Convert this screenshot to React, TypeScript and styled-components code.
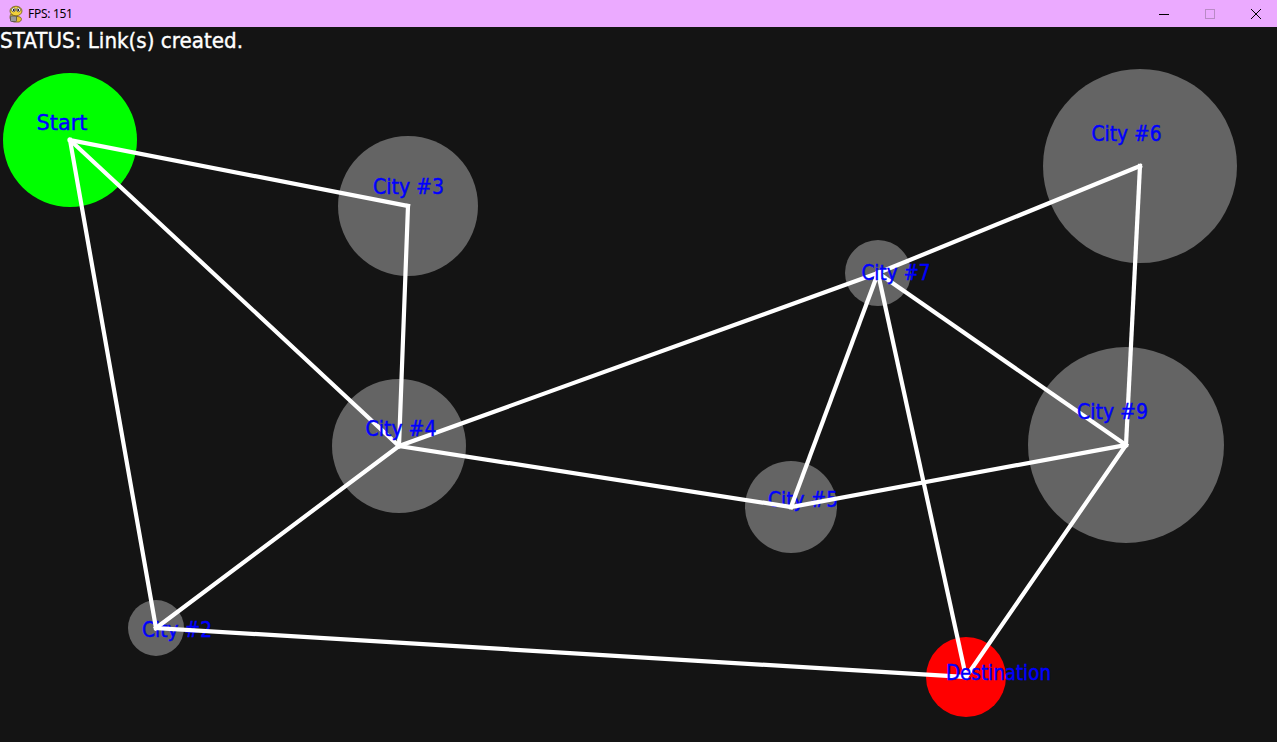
import React from "react";
import styled, { createGlobalStyle } from "styled-components";

const GlobalStyle = createGlobalStyle`
  html, body { margin: 0; padding: 0; background: #141414; overflow: hidden; }
  #root { width: 100vw; height: 100vh; }
`;

const Window = styled.div`
  display: flex;
  flex-direction: column;
  width: 1277px;
  height: 742px;
  overflow: hidden;
`;

const TitleBar = styled.div`
  display: flex;
  align-items: center;
  height: 27px;
  flex: 0 0 27px;
  background: #ebaaff;
  overflow: hidden;
`;

const AppIcon = styled.svg`
  width: 18px;
  height: 18px;
  margin-left: 7px;
  margin-right: 3px;
  flex: 0 0 auto;
`;

const TitleText = styled.span`
  font-family: "Noto Sans", "Open Sans", sans-serif;
  font-size: 12px;
  letter-spacing: -0.3px;
  color: #000;
  line-height: 27px;
`;

const Controls = styled.div`
  display: flex;
  margin-left: auto;
  margin-right: -2px;
  height: 27px;
`;

const ControlButton = styled.div`
  width: 46px;
  height: 27px;
  display: flex;
  align-items: center;
  justify-content: center;
`;

const Canvas = styled.div`
  position: relative;
  flex: 1 1 auto;
  background: #141414;
`;

const Graph = styled.svg`
  display: block;
  width: 1277px;
  height: 715px;
`;

const NodeLabel = styled.text`
  font-family: "DejaVu Sans", "Liberation Sans", sans-serif;
  font-size: 21px;
  fill: #0000ff;
  stroke: #0000ff;
  stroke-width: 0.45px;
`;

const StatusText = styled.text`
  font-family: "DejaVu Sans", "Liberation Sans", sans-serif;
  font-size: 22px;
  fill: #ffffff;
  stroke: #ffffff;
  stroke-width: 0.4px;
`;

type Node = {
  id: string;
  label: string;
  x: number;
  y: number;
  r: number;
  color: string;
  w: number;
  under?: boolean;
};

const nodes: Node[] = [
  { id: "start", label: "Start", x: 70, y: 140, r: 67, color: "#00ff00", w: 51 },
  { id: "c3", label: "City #3", x: 408, y: 206, r: 70, color: "#646464", w: 71 },
  { id: "c4", label: "City #4", x: 399, y: 446, r: 67, color: "#646464", w: 71 },
  { id: "c5", label: "City #5", x: 791, y: 507, r: 46, color: "#646464", w: 70, under: true },
  { id: "c2", label: "City #2", x: 156, y: 628, r: 28, color: "#646464", w: 70, under: true },
  { id: "dest", label: "Destination", x: 966, y: 677, r: 40, color: "#ff0000", w: 105 },
  { id: "c7", label: "City #7", x: 878, y: 273, r: 33, color: "#646464", w: 69 },
  { id: "c9", label: "City #9", x: 1126, y: 445, r: 98, color: "#646464", w: 71 },
  { id: "c6", label: "City #6", x: 1140, y: 166, r: 97, color: "#646464", w: 70 },
];

const links: [string, string][] = [
  ["start", "c3"],
  ["start", "c4"],
  ["start", "c2"],
  ["c3", "c4"],
  ["c4", "c7"],
  ["c4", "c5"],
  ["c4", "c2"],
  ["c7", "c5"],
  ["c7", "dest"],
  ["c7", "c9"],
  ["c6", "c7"],
  ["c6", "c9"],
  ["c5", "c9"],
  ["c9", "dest"],
  ["c2", "dest"],
];

const byId = Object.fromEntries(nodes.map((n) => [n.id, n]));

const Label: React.FC<{ n: Node }> = ({ n }) => (
  <NodeLabel
    x={n.x - n.r / 2}
    y={n.y - n.r / 2 + 23}
    textLength={n.w}
    lengthAdjust="spacingAndGlyphs"
  >
    {n.label}
  </NodeLabel>
);

export default function App() {
  return (
    <>
      <GlobalStyle />
      <Window>
        <TitleBar>
          <AppIcon viewBox="0 0 18 18">
            <path d="M4 9 C2 12 3 16 7 17 L12 17 C15 16 15 13 13 12 L8 11 Z" fill="#e8c030" stroke="#6b5a10" strokeWidth="0.8" />
            <rect x="3.5" y="11" width="6" height="5.5" rx="1" fill="#9a9a9a" stroke="#444" strokeWidth="0.7" />
            <ellipse cx="9" cy="6" rx="6" ry="4.8" fill="#f2d23a" stroke="#6b5a10" strokeWidth="0.8" />
            <circle cx="6.5" cy="4.8" r="2" fill="#fff" stroke="#333" strokeWidth="0.6" />
            <circle cx="11.5" cy="4.8" r="2" fill="#fff" stroke="#333" strokeWidth="0.6" />
            <circle cx="6.8" cy="5" r="0.9" fill="#000" />
            <circle cx="11.2" cy="5" r="0.9" fill="#000" />
          </AppIcon>
          <TitleText>FPS: 151</TitleText>
          <Controls>
            <ControlButton>
              <svg width="10" height="10" viewBox="0 0 10 10">
                <line x1="0" y1="5.5" x2="10" y2="5.5" stroke="#000" strokeWidth="1" />
              </svg>
            </ControlButton>
            <ControlButton>
              <svg width="10" height="10" viewBox="0 0 10 10">
                <rect x="0.5" y="0.5" width="9" height="9" fill="none" stroke="#b98ac6" strokeWidth="1" />
              </svg>
            </ControlButton>
            <ControlButton>
              <svg width="10" height="10" viewBox="0 0 10 10">
                <path d="M0 0 L10 10 M10 0 L0 10" stroke="#000" strokeWidth="1" />
              </svg>
            </ControlButton>
          </Controls>
        </TitleBar>
        <Canvas>
          <Graph viewBox="0 27 1277 715">
            <StatusText x={0} y={48} textLength={243} lengthAdjust="spacingAndGlyphs">
              STATUS: Link(s) created.
            </StatusText>
            {nodes.map((n) => (
              <circle key={n.id} cx={n.x} cy={n.y} r={n.r} fill={n.color} />
            ))}
            {nodes.filter((n) => n.under).map((n) => (
              <Label key={n.id} n={n} />
            ))}
            {links.map(([a, b]) => {
              const p = byId[a];
              const q = byId[b];
              return (
                <line
                  key={a + b}
                  x1={p.x}
                  y1={p.y}
                  x2={q.x}
                  y2={q.y}
                  stroke="#ffffff"
                  strokeWidth={4.2}
                  strokeLinecap="square"
                />
              );
            })}
            {nodes.filter((n) => !n.under).map((n) => (
              <Label key={n.id} n={n} />
            ))}
          </Graph>
        </Canvas>
      </Window>
    </>
  );
}
